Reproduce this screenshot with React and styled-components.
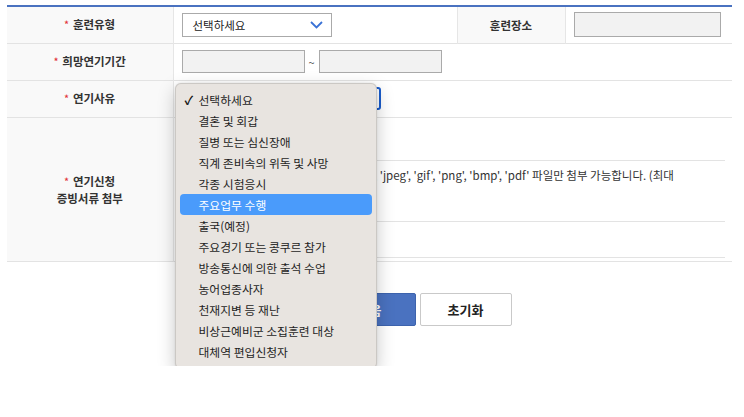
import styled, { createGlobalStyle } from 'styled-components'

const GlobalStyle = createGlobalStyle`
  html, body {
    margin: 0;
    padding: 0;
    background: #fff;
  }
  body {
    font-family: 'Noto Sans CJK KR', 'Noto Sans', sans-serif;
    color: #222;
  }
`

const Page = styled.div`
  padding: 5px 12px 40px 7px;
`

const FormTable = styled.table`
  width: 725px;
  border-collapse: collapse;
  table-layout: fixed;
  border-top: 2px solid #4a72c0;
`

const Row = styled.tr`
  height: ${p => p.$h || 37}px;
  border-bottom: 1px solid #e3e3e3;
`

const Label = styled.th`
  background: #f9f9f9;
  font-size: 11.5px;
  font-weight: 700;
  color: #333;
  text-align: center;
  line-height: 16px;
  padding: 0;
  border-left: ${p => (p.$side ? '1px solid #e6e6e6' : 'none')};
  border-right: 1px solid #e6e6e6;
`

const Star = styled.span`
  color: #e2363a;
  font-size: 9px;
  margin-right: 4px;
  vertical-align: 1px;
`

const Cell = styled.td`
  padding: ${p => p.$pad || '0 8px'};
  vertical-align: middle;
`

const SelectBox = styled.div`
  position: relative;
  width: ${p => p.$w}px;
  height: ${p => p.$h}px;
  box-sizing: border-box;
  border: ${p => (p.$focus ? '2px solid #1a5ccb' : '1px solid #aaa')};
  border-radius: ${p => (p.$focus ? '3px' : '0')};
  background: #fff;
  display: flex;
  align-items: center;
  justify-content: space-between;
  padding: 0 8px 0 10px;
  font-size: 11.5px;
  color: #222;
`

const TextBox = styled.div`
  width: ${p => p.$w}px;
  height: ${p => p.$h}px;
  box-sizing: border-box;
  border: 1px solid #aaa;
  background: #f2f2f2;
`

const Range = styled.div`
  display: flex;
  align-items: center;
  gap: 4px;
  font-size: 11px;
  color: #555;
`

const SubRows = styled.div`
  margin-right: 7px;
  display: flex;
  flex-direction: column;
  height: 138px;
`

const SubRow = styled.div`
  height: ${p => p.$h}px;
  border-bottom: 1px solid #e3e3e3;
  box-sizing: border-box;
  padding: ${p => p.$pad || '0'};
  font-size: 11.5px;
  line-height: 18px;
  color: #333;
`

const Buttons = styled.div`
  width: 725px;
  display: flex;
  justify-content: center;
  gap: 4px;
  margin-top: 31px;
`

const Button = styled.button`
  width: 92px;
  height: 33px;
  box-sizing: border-box;
  border-radius: 2px;
  font-family: inherit;
  font-size: 13px;
  font-weight: 700;
  border: 1px solid ${p => (p.$primary ? '#3d63ad' : '#c9c9c9')};
  background: ${p => (p.$primary ? '#4a72c0' : '#fff')};
  color: ${p => (p.$primary ? '#fff' : '#222')};
  padding: 0;
`

const Menu = styled.ul`
  position: absolute;
  left: -9px;
  top: -6px;
  width: 202px;
  margin: 0;
  padding: 5px 0 6px;
  list-style: none;
  box-sizing: border-box;
  background: #e8e4e0;
  border: 1px solid rgba(0, 0, 0, 0.12);
  border-radius: 6px;
  box-shadow: 0 6px 18px rgba(0, 0, 0, 0.22), 0 0 2px rgba(0, 0, 0, 0.1);
  z-index: 10;
`

const Item = styled.li`
  position: relative;
  height: 21px;
  line-height: 21px;
  margin: 0 4px 0 4px;
  padding-left: 19px;
  border-radius: 4px;
  font-size: 11.8px;
  color: ${p => (p.$active ? '#fff' : '#1e1e1e')};
  background: ${p => (p.$active ? '#4a9bfb' : 'transparent')};
  white-space: nowrap;
`

const Check = styled.span`
  position: absolute;
  left: 5px;
  top: 0;
  font-size: 12px;
  font-weight: 700;
  color: #111;
`

const Chevron = () => (
  <svg width="13" height="8" viewBox="0 0 13 8">
    <path d="M1 1l5.5 5.5L12 1" fill="none" stroke="#3a72d6" strokeWidth="1.8" />
  </svg>
)

const reasons = [
  '선택하세요',
  '결혼 및 회갑',
  '질병 또는 심신장애',
  '직계 존비속의 위독 및 사망',
  '각종 시험응시',
  '주요업무 수행',
  '출국(예정)',
  '주요경기 또는 콩쿠르 참가',
  '방송통신에 의한 출석 수업',
  '농어업종사자',
  '천재지변 등 재난',
  '비상근예비군 소집훈련 대상',
  '대체역 편입신청자',
]

const App = () => {
  return (
    <Page>
      <GlobalStyle />
      <FormTable>
        <colgroup>
          <col style={{ width: 166 }} />
          <col style={{ width: 284 }} />
          <col style={{ width: 108 }} />
          <col style={{ width: 167 }} />
        </colgroup>
        <tbody>
          <Row>
            <Label><Star>*</Star>훈련유형</Label>
            <Cell>
              <SelectBox $w={150} $h={24}>
                선택하세요
                <Chevron />
              </SelectBox>
            </Cell>
            <Label $side>훈련장소</Label>
            <Cell>
              <TextBox $w={147} $h={25} />
            </Cell>
          </Row>
          <Row>
            <Label><Star>*</Star>희망연기기간</Label>
            <Cell colSpan={3}>
              <Range>
                <TextBox $w={123} $h={23} />
                ~
                <TextBox $w={123} $h={23} />
              </Range>
            </Cell>
          </Row>
          <Row>
            <Label><Star>*</Star>연기사유</Label>
            <Cell colSpan={3}>
              <SelectBox $w={199} $h={23} $focus>
                <Menu>
                  {reasons.map((r, i) => (
                    <Item key={r} $active={i === 5}>
                      {i === 0 && <Check>✓</Check>}
                      {r}
                    </Item>
                  ))}
                </Menu>
              </SelectBox>
            </Cell>
          </Row>
          <Row $h={144}>
            <Label><Star>*</Star>연기신청<br />증빙서류 첨부</Label>
            <Cell colSpan={3} $pad="0 0 0 9px">
              <SubRows>
                <SubRow $h={41} />
                <SubRow $h={61} $pad="5px 0 0">
                  ※ 첨부파일은 10MB 이하의 'hwp', 'jpg', 'jpeg', 'gif', 'png', 'bmp', 'pdf' 파일만 첨부 가능합니다. (최대<br />
                  3개까지 첨부 가능)
                </SubRow>
                <SubRow $h={36} />
              </SubRows>
            </Cell>
          </Row>
        </tbody>
      </FormTable>
      <Buttons>
        <Button>이전</Button>
        <Button $primary>다음</Button>
        <Button>초기화</Button>
      </Buttons>
    </Page>
  )
}

export default App
